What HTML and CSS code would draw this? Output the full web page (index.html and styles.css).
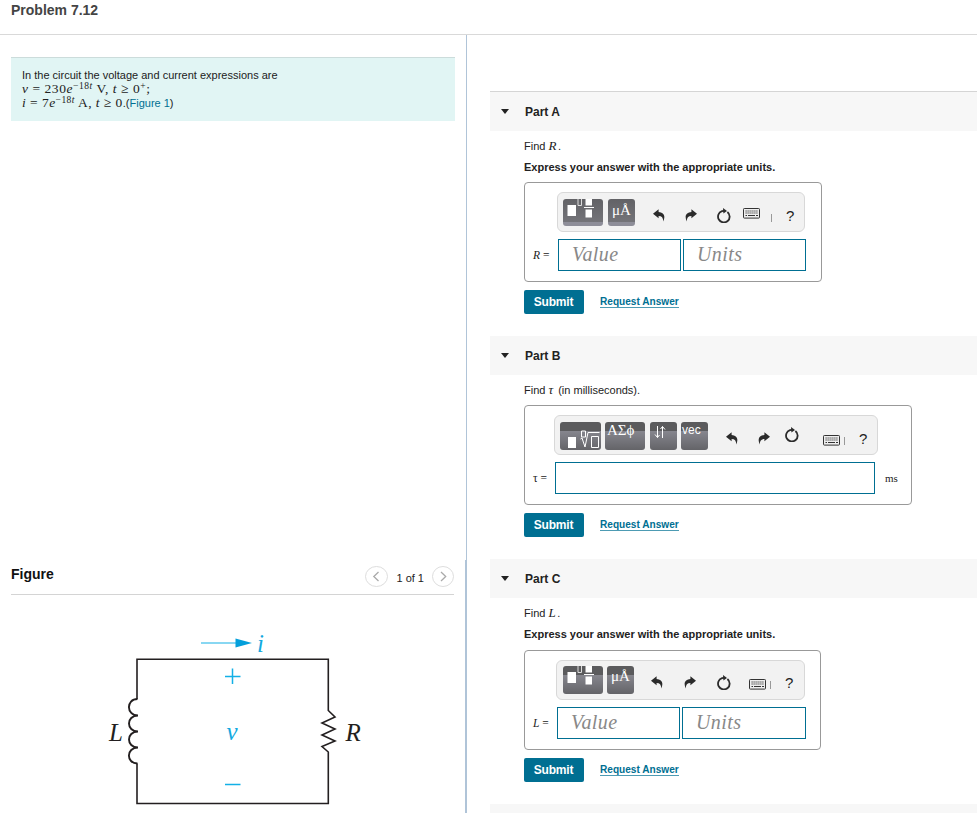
FILE: index.html
```html
<!DOCTYPE html>
<html lang="en">
<head>
    <meta charset="UTF-8">
    <meta name="viewport" content="width=device-width, initial-scale=1.0">
    <title>Problem 7.12</title>
    <link rel="stylesheet" href="styles.css">
</head>
<body>
    <!-- shared toolbar icons -->
    <svg class="defs">
        <symbol id="undo" viewBox="0 0 12 13"><path d="M0 4.7L5.6 .3V2.9C10.5 3.2 13 6.5 10.2 12.4C10.2 8.8 8.8 7.1 5.6 7.1V9.3Z"/></symbol>
        <symbol id="redo" viewBox="0 0 12 13"><path d="M12 4.7L6.4 .3V2.9C1.5 3.2 -1 6.5 1.8 12.4C1.8 8.8 3.2 7.1 6.4 7.1V9.3Z"/></symbol>
        <symbol id="reset" viewBox="0 0 14 15"><path d="M10.4 4A5.8 5.8 0 1 1 5 3.1L7 2.8" fill="none" stroke="#2b2b2b" stroke-width="1.8"/><path d="M6 0L10 2.9L6.4 5.5Z"/></symbol>
        <symbol id="keys" viewBox="0 0 17 11"><rect x=".5" y=".5" width="16" height="9.6" rx=".8" fill="#eee" stroke="#333"/><path d="M2.5 3H15M2.5 5H15" stroke="#333" stroke-width="1.2" stroke-dasharray="1.2 .8"/><path d="M2.5 7.5H4M5 7.5H12M13 7.5H15" stroke="#333" stroke-width="1.2"/></symbol>
        <symbol id="template" viewBox="0 0 40 28">
            <rect x="4.5" y="6" width="8.5" height="11" fill="#fff"/>
            <path d="M15 0V6.5H18.5V0" fill="none" stroke="#ddd"/>
            <path d="M22.5 0H29V6.5H22.5ZM21 8H31V9H21ZM22.5 10.5H29V18.5H22.5Z" fill="#fff"/>
        </symbol>
    </svg>

    <header class="page-head"><h1>Problem 7.12</h1></header>

    <div class="columns">
        <aside class="left">
            <section class="intro">
                <p class="intro-text">In the circuit the voltage and current expressions are</p>
                <p class="math wide-math"><i>v</i> = 230<i>e</i><sup>−18<i>t</i></sup> V, <i>t</i> ≥ 0<sup>+</sup>;</p>
                <p class="math"><i>i</i> = 7<i>e</i><sup>−18<i>t</i></sup> A, <i>t</i> ≥ 0<span class="fig-link">.(<a>Figure 1</a>)</span></p>
            </section>
            <section class="figure">
                <div class="figure-head">
                    <h2>Figure</h2>
                    <div class="pager">
                        <svg class="circle" viewBox="0 0 23 21"><ellipse cx="11.5" cy="10.5" rx="11" ry="10"/><path d="M13.5 6L8.8 10.5L13.5 15"/></svg>
                        <span>1 of 1</span>
                        <svg class="circle next" viewBox="0 0 22 21"><ellipse cx="11" cy="10.5" rx="10.5" ry="10"/><path d="M9 6L13.7 10.5L9 15"/></svg>
                    </div>
                </div>
                <svg class="circuit" viewBox="90 620 290 193">
                    <path class="wire" d="M137 699V659.3H328.3V710.5L335 717L322 723L335 729L322 735L335 741L322 746.5L328.3 752V803.5H137V763.5"/>
                    <path class="coil" d="M137.5 699C126 699 126 715.5 138 715.5C126 715.5 126 731.5 138 731.5C126 731.5 126 747.5 138 747.5C126 747.5 126 763.5 137.5 763.5"/>
                    <path class="blue" d="M225 676.5H240.5M232.5 668.5V684M225 784.5H240.5"/>
                    <path class="blue thin" d="M201 643H237"/>
                    <path class="head" d="M235.5 638.5L252 643L235.5 647.5Z"/>
                    <text class="label cyan" x="257" y="652">i</text>
                    <text class="label cyan" x="226.5" y="740">v</text>
                    <text class="label" x="109" y="741">L</text>
                    <text class="label" x="345.5" y="741">R</text>
                </svg>
            </section>
        </aside>

        <main class="right">
            <section class="part part-a">
                <h3 class="part-head"><span class="caret"></span>Part A</h3>
                <p class="find">Find <i>R</i>.</p>
                <p class="express">Express your answer with the appropriate units.</p>
                <div class="answer">
                    <div class="toolbar">
                        <span class="btn wide"><svg><use href="#template"/></svg></span>
                        <span class="btn unit">μÅ</span>
                        <svg class="icon undo"><use href="#undo"/></svg>
                        <svg class="icon redo"><use href="#redo"/></svg>
                        <svg class="icon reset"><use href="#reset"/></svg>
                        <svg class="icon keys"><use href="#keys"/></svg>
                        <span class="bar"></span>
                        <span class="help">?</span>
                    </div>
                    <div class="fields">
                        <label><i>R</i> =</label>
                        <div class="field">Value</div>
                        <div class="field">Units</div>
                    </div>
                </div>
                <div class="actions"><button>Submit</button><a class="request">Request Answer</a></div>
            </section>

            <section class="part part-b">
                <h3 class="part-head"><span class="caret"></span>Part B</h3>
                <p class="find">Find <i class="tau">τ</i> (in milliseconds).</p>
                <div class="answer">
                    <div class="toolbar">
                        <span class="btn wide"><svg viewBox="0 0 41 28"><path d="M8 15H16V26H8Z" fill="#fff"/><path d="M20.5 17L22 16L25 25L28 10.5H39.5M21.5 9H25.5V15H21.5ZM31.5 14.5H38.5V25.5H31.5Z" fill="none" stroke="#fff"/></svg></span>
                        <span class="btn greek">ΑΣϕ</span>
                        <span class="btn arrows"><svg viewBox="0 0 27 28"><path d="M7.5 4V15.5M5 12.5L7.5 15.5L9.5 13M12.5 16V4.5M10.5 7L12.5 4.5L15 7.5" fill="none" stroke="#fff"/></svg></span>
                        <span class="btn vec">vec</span>
                        <svg class="icon undo"><use href="#undo"/></svg>
                        <svg class="icon redo"><use href="#redo"/></svg>
                        <svg class="icon reset"><use href="#reset"/></svg>
                        <svg class="icon keys"><use href="#keys"/></svg>
                        <span class="bar"></span>
                        <span class="help">?</span>
                    </div>
                    <div class="fields">
                        <label>τ =</label>
                        <div class="field"></div>
                        <span class="suffix">ms</span>
                    </div>
                </div>
                <div class="actions"><button>Submit</button><a class="request">Request Answer</a></div>
            </section>

            <section class="part part-c">
                <h3 class="part-head"><span class="caret"></span>Part C</h3>
                <p class="find">Find <i>L</i>.</p>
                <p class="express">Express your answer with the appropriate units.</p>
                <div class="answer">
                    <div class="toolbar">
                        <span class="btn wide"><svg><use href="#template"/></svg></span>
                        <span class="btn unit">μÅ</span>
                        <svg class="icon undo"><use href="#undo"/></svg>
                        <svg class="icon redo"><use href="#redo"/></svg>
                        <svg class="icon reset"><use href="#reset"/></svg>
                        <svg class="icon keys"><use href="#keys"/></svg>
                        <span class="bar"></span>
                        <span class="help">?</span>
                    </div>
                    <div class="fields">
                        <label><i>L</i> =</label>
                        <div class="field">Value</div>
                        <div class="field units">Units</div>
                    </div>
                </div>
                <div class="actions"><button>Submit</button><a class="request">Request Answer</a></div>
            </section>
            <div class="next-part"></div>
        </main>
    </div>
</body>
</html>
```
FILE: styles.css
```css
* {
    box-sizing: border-box;
}
body {
    margin: 0;
    height: 813px;
    overflow: hidden;
    background: #fff;
    color: #222;
    font-family: "Liberation Sans", Arial, sans-serif;
    font-size: 11px;
}
h1, h2, h3, p {
    margin: 0;
}
.defs {
    display: none;
}
.page-head {
    height: 35px;
    padding: 2px 0 0 11px;
    border-bottom: 1px solid #d9d9d9;
}
h1 {
    font-size: 14px;
    line-height: 16px;
    color: #444;
}
.columns {
    display: flex;
    height: 778px;
}

/* Left column */
.left {
    width: 467px;
    display: flex;
    flex-direction: column;
    border-right: 1px solid #b0c4d8;
}
.intro {
    margin: 22px 11px 0;
    height: 64px;
    padding: 10px 11px;
    background: #e1f5f4;
    border-top: 1px solid #ccdcdb;
}
.intro p {
    height: 14px;
    line-height: 14px;
    white-space: nowrap;
}
.math {
    font-family: "Liberation Serif", serif;
    font-size: 13.5px;
    letter-spacing: 0.45px;
}
.wide-math {
    letter-spacing: 0.55px;
}
.math sup {
    font-size: 9.5px;
    line-height: 0;
    vertical-align: 4px;
}
.fig-link {
    font-family: "Liberation Sans", Arial, sans-serif;
    font-size: 11px;
    letter-spacing: 0;
}
.fig-link a {
    color: #006f92;
}
.figure {
    margin-top: 439px;
    height: 253px;
    border-right: 1px solid #b0c4d8;
}
.figure-head {
    display: flex;
    justify-content: space-between;
    margin: 0 11px;
    height: 35px;
    border-bottom: 1px solid #d4d4d4;
}
h2 {
    font-size: 14px;
    line-height: 17px;
    margin-top: 6px;
    color: #111;
}
.pager {
    display: flex;
    align-items: center;
    gap: 8px;
    height: 21px;
    margin-top: 6px;
}
.pager span {
    padding-top: 3px;
}
.circle {
    width: 23px;
    height: 21px;
    fill: none;
    stroke: #ddd;
}
.circle.next {
    width: 22px;
}
.circle path {
    stroke: #aaa;
    stroke-width: 1.3;
}
.circuit {
    display: block;
    width: 290px;
    height: 193px;
    margin: 25px 0 0 90px;
}
.wire, .coil {
    fill: none;
    stroke: #231f20;
    stroke-width: 1.6;
}
.coil {
    stroke-width: 1.9;
}
.blue {
    fill: none;
    stroke: #13b0e6;
    stroke-width: 1.5;
}
.thin {
    stroke-width: 1.2;
}
.head {
    fill: #049fdb;
}
.label {
    font-family: "Liberation Serif", serif;
    font-style: italic;
    font-size: 25px;
    fill: #231f20;
}
.cyan {
    fill: #13a9e0;
}

/* Right column */
.right {
    flex: 1;
    padding: 56px 0 0 23px;
}
.part {
    height: 223px;
}
.part-a, .part-c {
    height: 245px;
}
.part-head {
    display: flex;
    align-items: center;
    height: 39px;
    background: #f7f7f7;
    font-size: 12px;
}
.part-a .part-head {
    height: 40px;
    border-top: 1px solid #d5d5d5;
}
.caret {
    width: 0;
    border: 4.5px solid transparent;
    border-top: 5px solid #222;
    border-bottom: 0;
    margin: 0 16px 0 11px;
}
.find {
    margin: 8px 0 0 34px;
    height: 15px;
    line-height: 15px;
}
.find i {
    font-family: "Liberation Serif", serif;
    font-size: 13px;
    line-height: 1;
    letter-spacing: 1.5px;
}
.express {
    margin: 6px 0 0 34px;
    line-height: 15px;
    font-weight: bold;
}
.answer {
    width: 298px;
    height: 100px;
    margin: 7px 0 0 34px;
    padding: 9px 0 0 32px;
    border: 1px solid #999;
    border-radius: 4px;
}
.toolbar {
    display: flex;
    align-items: flex-start;
    width: 248px;
    height: 40px;
    padding: 6px 0 0 5px;
    background: #f2f2f2;
    border: 1px solid #d8d8d8;
    border-radius: 6px;
}
.toolbar > * {
    flex: none;
}
.btn {
    width: 27px;
    height: 28px;
    border-radius: 3px;
    background: linear-gradient(#5b5b5d 0 9px, #86868e 9px, #646468);
    color: #fff;
    overflow: hidden;
}
.btn svg {
    display: block;
    width: 100%;
    height: 28px;
}
.btn.wide {
    width: 40px;
    margin-right: 5px;
}
.btn.unit {
    font: 15px/22px "Liberation Serif", serif;
    text-align: center;
}
.part-a .btn {
    height: 27px;
    background: linear-gradient(#626266, #747479 23px, #8e8e99 23px);
}
.icon {
    fill: #2b2b2b;
}
.undo, .redo {
    width: 12px;
    height: 13px;
}
.undo {
    margin: 10px 0 0 18px;
}
.redo {
    margin: 10px 0 0 20px;
}
.reset {
    width: 14px;
    height: 15px;
    margin: 9px 0 0 20px;
}
.keys {
    width: 17px;
    height: 11px;
    margin: 10px 0 0 12px;
}
.part-a .keys {
    margin-top: 9px;
}
.bar {
    width: 1px;
    height: 8px;
    margin: 15px 0 0 11px;
    background: #999;
}
.help {
    margin: 9px 0 0 14px;
    font-size: 15px;
    line-height: 16px;
}
.fields {
    display: flex;
    align-items: center;
    height: 32px;
    margin: 7px 0 0 -24px;
}
.fields label {
    width: 25px;
    font: 11.5px "Liberation Serif", serif;
    white-space: nowrap;
}
.field {
    width: 123px;
    height: 32px;
    margin-right: 2px;
    padding-left: 13px;
    border: 1px solid #006f92;
    font: italic 20px/29px "Liberation Serif", serif;
    letter-spacing: 0.4px;
    color: #888;
}
.actions {
    display: flex;
    align-items: center;
    height: 24px;
    margin: 8px 0 0 34px;
}
button {
    width: 60px;
    height: 24px;
    padding: 0 1px 1px 0;
    border: 0;
    border-radius: 2px;
    background: #006f92;
    color: #fff;
    font: bold 12px "Liberation Sans", Arial, sans-serif;
    letter-spacing: -0.2px;
}
.request {
    margin-left: 16px;
    font-size: 10.1px;
    line-height: 11px;
    font-weight: bold;
    color: #006f92;
    border-bottom: 1px solid #4d9bb3;
}

/* Part B */
.part-b .find .tau {
    letter-spacing: 2px;
}
.part-b .answer {
    width: 388px;
    padding-left: 29px;
}
.part-b .toolbar {
    width: 324px;
}
.part-b .btn {
    margin-right: 4px;
}
.part-b .btn.wide {
    width: 41px;
}
.btn.greek {
    width: 40px;
    padding-left: 2px;
    font: 15px/17px "Liberation Serif", serif;
}
.part-b .btn.greek {
    margin-right: 5px;
}
.btn.vec {
    padding-left: 1px;
    font-size: 12px;
    line-height: 17px;
}
.part-b .undo {
    margin-left: 14px;
}
.part-b .reset {
    margin: 5px 0 0 15px;
}
.part-b .keys {
    margin: 13px 0 0 24px;
}
.part-b .bar {
    margin-left: 4px;
}
.part-b .fields {
    margin-left: -21px;
}
.part-b label {
    width: 22px;
}
.part-b .field {
    width: 320px;
}
.suffix {
    margin-left: 8px;
    font: 11px "Liberation Serif", serif;
}

/* Part C */
.part-c .answer {
    width: 297px;
    margin-top: 8px;
    padding-left: 31px;
}
.part-c .toolbar {
    width: 249px;
    padding: 5px 0 0 6px;
}
.part-c .btn.wide {
    margin-right: 4px;
}
.part-c .btn.unit {
    line-height: 20px;
}
.part-c .undo {
    margin-left: 17px;
}
.part-c .redo {
    margin-left: 21px;
}
.part-c .reset {
    margin-left: 21px;
}
.part-c .keys {
    margin: 13px 0 0 18px;
}
.part-c .bar {
    margin-left: 4px;
}
.part-c .fields {
    margin-left: -23px;
}
.part-c label {
    width: 24px;
}
.part-c .units {
    width: 124px;
}
.next-part {
    height: 20px;
    background: #f7f7f7;
}
```
